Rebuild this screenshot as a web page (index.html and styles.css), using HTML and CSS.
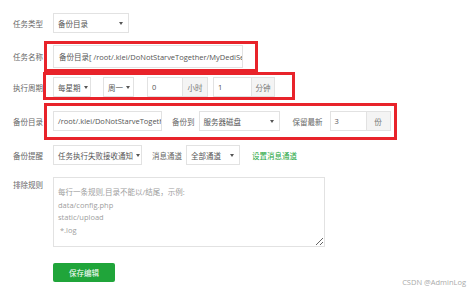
FILE: index.html
```html
<!DOCTYPE html>
<html lang="zh-CN">
<head>
  <meta charset="UTF-8">
  <title>计划任务 - 备份目录</title>
  <link rel="stylesheet" href="styles.css">
</head>
<body>
  <div class="form">
    <div class="row r1">
      <span class="label">任务类型</span>
      <div class="select w76"><span>备份目录</span><i class="caret"></i></div>
    </div>

    <div class="row r2">
      <span class="label">任务名称</span>
      <div class="input w190">备份目录[ /root/.klei/DoNotStarveTogether/MyDediServer ]</div>
      <div class="mark m2"></div>
    </div>

    <div class="row r3">
      <span class="label">执行周期</span>
      <div class="select w38"><span>每星期</span><i class="caret"></i></div>
      <div class="select w31 ml12"><span>周一</span><i class="caret"></i></div>
      <div class="group ml13">
        <div class="input w36">0</div>
        <div class="addon w25">小时</div>
      </div>
      <div class="group ml5">
        <div class="input w39">1</div>
        <div class="addon w23">分钟</div>
      </div>
      <div class="mark m3"></div>
    </div>

    <div class="row r4">
      <span class="label">备份目录</span>
      <div class="input w109">/root/.klei/DoNotStarveTogether/MyDediServer</div>
      <span class="sub ml10">备份到</span>
      <div class="select w81"><span>服务器磁盘</span><i class="caret"></i></div>
      <span class="sub ml13">保留最新</span>
      <div class="group ml3">
        <div class="input w37">3</div>
        <div class="addon w24">份</div>
      </div>
      <div class="mark m4"></div>
    </div>

    <div class="row r5">
      <span class="label">备份提醒</span>
      <div class="select w89"><span>任务执行失败接收通知</span><i class="caret"></i></div>
      <span class="sub ml10">消息通道</span>
      <div class="select w54"><span>全部通道</span><i class="caret"></i></div>
      <a class="link" href="#">设置消息通道</a>
    </div>

    <div class="row r6">
      <span class="label top">排除规则</span>
      <textarea class="rules" placeholder="每行一条规则,目录不能以/结尾，示例:&#10;data/config.php&#10;static/upload&#10; *.log"></textarea>
    </div>

    <div class="row r7">
      <button class="save">保存编辑</button>
    </div>
  </div>

  <div class="watermark">CSDN @AdminLog</div>
</body>
</html>
```

FILE: styles.css
```css
body {
  margin: 0;
  background: #fff;
  font-family: "Open Sans", "Noto Sans CJK SC", sans-serif;
  font-size: 7.5px;
  color: #555;
  overflow: hidden;
}
.form {
  padding: 13px 0 0 13px;
}
.row {
  position: relative;
  display: flex;
  align-items: center;
  height: 20px;
}
.r1 { margin-bottom: 12px; }
.r2 { height: 23px; margin-bottom: 9px; }
.r3 { margin-bottom: 14px; }
.r4 { margin-bottom: 14px; }
.r5 { margin-bottom: 12px; }
.r6 { height: 70px; align-items: flex-start; margin-bottom: 16px; }
.r7 { height: 19px; padding-left: 40px; }

.label {
  width: 40px;
  flex: none;
  color: #666;
}
.label.top {
  padding-top: 2px;
}
.sub {
  color: #666;
  margin-right: 4px;
  white-space: nowrap;
}

.select,
.input,
.addon {
  box-sizing: border-box;
  height: 100%;
  border: 1px solid #e2e2e2;
  background: #fff;
  display: flex;
  align-items: center;
  white-space: nowrap;
  overflow: hidden;
  flex: none;
}
.select {
  justify-content: space-between;
  padding: 0 5px 0 4px;
}
.input {
  padding: 0 4px;
}
.r2 .input {
  padding-left: 5px;
}
.group {
  display: flex;
  height: 100%;
}
.addon {
  border-left: none;
  background: #f4f4f4;
  justify-content: center;
  color: #777;
}
.caret {
  width: 0;
  height: 0;
  border-left: 2.5px solid transparent;
  border-right: 2.5px solid transparent;
  border-top: 3px solid #555;
  margin-left: 3px;
}

.w23 { width: 23px; }
.w24 { width: 24px; }
.w25 { width: 25px; }
.w31 { width: 31px; }
.w36 { width: 36px; }
.w37 { width: 37px; }
.w38 { width: 38px; }
.w39 { width: 39px; }
.w54 { width: 54px; }
.w76 { width: 76px; }
.w81 { width: 81px; }
.w89 { width: 89px; }
.w109 { width: 109px; }
.w190 { width: 190px; }
.ml3 { margin-left: 3px; }
.ml5 { margin-left: 5px; }
.ml10 { margin-left: 10px; }
.ml12 { margin-left: 12px; }
.ml13 { margin-left: 13px; }

.link {
  margin-left: 12px;
  color: #20a53a;
  text-decoration: none;
}

.rules {
  box-sizing: border-box;
  width: 272px;
  height: 70px;
  border: 1px solid #e2e2e2;
  padding: 8px 4px;
  font-family: "Open Sans", "Noto Sans CJK SC", sans-serif;
  font-size: 7.5px;
  line-height: 12.7px;
  color: #555;
  outline: none;
}
.rules::placeholder {
  color: #a0a0a0;
}

.save {
  width: 62px;
  height: 19px;
  border: none;
  border-radius: 2px;
  background: #20a53a;
  color: #fff;
  font-family: "Open Sans", "Noto Sans CJK SC", sans-serif;
  font-size: 7.5px;
  padding: 0;
}

/* red annotation boxes drawn over the form */
.mark {
  position: absolute;
  box-sizing: border-box;
  border: 3px solid #e8232a;
  pointer-events: none;
}
.m2 { left: 31px; top: -4px; width: 214px; height: 31px; }
.m3 { left: 30px; top: -5px; width: 252px; height: 28px; }
.m4 { left: 31px; top: -8px; width: 353px; height: 37px; }

.watermark {
  position: absolute;
  right: 8px;
  bottom: 2px;
  color: #aaa;
  font-size: 7.5px;
}
```
